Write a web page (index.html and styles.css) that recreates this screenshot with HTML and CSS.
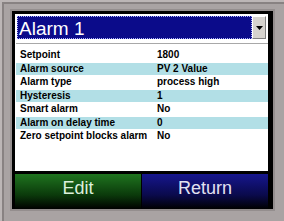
FILE: index.html
```html
<!DOCTYPE html>
<html lang="en">
<head>
<meta charset="UTF-8">
<title>Alarm 1</title>
<link rel="stylesheet" href="styles.css">
</head>
<body>
<div class="bezel">
  <div class="screen">
    <div class="panel">
      <div class="select">
        <div class="select-value">Alarm 1</div>
        <div class="select-arrow">
          <svg width="7" height="4" viewBox="0 0 7 4"><path d="M0 0H7L3.5 4Z" fill="#000"/></svg>
        </div>
      </div>
      <div class="rows">
        <div class="row"><span class="label">Setpoint</span><span class="value">1800</span></div>
        <div class="row alt"><span class="label">Alarm source</span><span class="value">PV 2 Value</span></div>
        <div class="row"><span class="label">Alarm type</span><span class="value">process high</span></div>
        <div class="row alt"><span class="label">Hysteresis</span><span class="value">1</span></div>
        <div class="row"><span class="label">Smart alarm</span><span class="value">No</span></div>
        <div class="row alt"><span class="label">Alarm on delay time</span><span class="value">0</span></div>
        <div class="row"><span class="label">Zero setpoint blocks alarm</span><span class="value">No</span></div>
      </div>
    </div>
    <div class="buttons">
      <div class="btn btn-edit">Edit</div>
      <div class="btn btn-return">Return</div>
    </div>
  </div>
</div>
</body>
</html>
```

FILE: styles.css
```css
html,
body {
  margin: 0;
  padding: 0;
}
body {
  width: 284px;
  height: 221px;
  background: #a9a3a3;
  font-family: "Liberation Sans", Arial, sans-serif;
  overflow: hidden;
}
.bezel {
  box-sizing: border-box;
  height: 221px;
  padding: 11px 11px 12px 12px;
  box-shadow: inset 2px 2px 0 #bcb6b6, inset 4px 4px 0 #888282;
}
.screen {
  box-sizing: border-box;
  height: 198px;
  display: flex;
  flex-direction: column;
  padding: 3px 5px 0 3px;
  background: #000;
  box-shadow: 0 0 0 2px #948e8e;
}
.panel {
  height: 157px;
  background: #fff;
}
.select {
  display: flex;
  height: 27px;
  box-sizing: border-box;
  padding: 2px;
}
.select-value {
  flex: 1;
  box-sizing: border-box;
  height: 23px;
  padding: 1px 0 0 1px;
  border: 1px dotted #aab0ff;
  background: #0b0b8a;
  color: #fff;
  font-size: 19px;
  line-height: 21px;
}
.select-arrow {
  box-sizing: border-box;
  width: 14px;
  height: 23px;
  display: flex;
  align-items: center;
  justify-content: center;
  background: #d6d3ce;
  border: 1px solid;
  border-color: #fff #808080 #808080 #fff;
}
.rows {
  margin: 2px 0 0 1px;
  padding-top: 5px;
  border-top: 1px solid #a8a8a8;
  display: flex;
  flex-direction: column;
  gap: 1.5px;
}
.row {
  display: flex;
  height: 12px;
  font-size: 10px;
  font-weight: bold;
  line-height: 12px;
  color: #000;
}
.row.alt {
  background: #b2dfe6;
}
.label {
  width: 137px;
  padding-left: 4px;
  white-space: nowrap;
}
.buttons {
  display: flex;
  gap: 1px;
  height: 35px;
  margin-top: 3px;
}
.btn {
  flex: 1;
  text-align: center;
  font-size: 18px;
  line-height: 28px;
}
.btn-edit {
  background: linear-gradient(#1f741f, #0b3a0b 60%, #000);
  color: #dcf0dc;
}
.btn-return {
  background: linear-gradient(#16168e, #0a0a4c 60%, #000);
  color: #e2e2f2;
}
```
